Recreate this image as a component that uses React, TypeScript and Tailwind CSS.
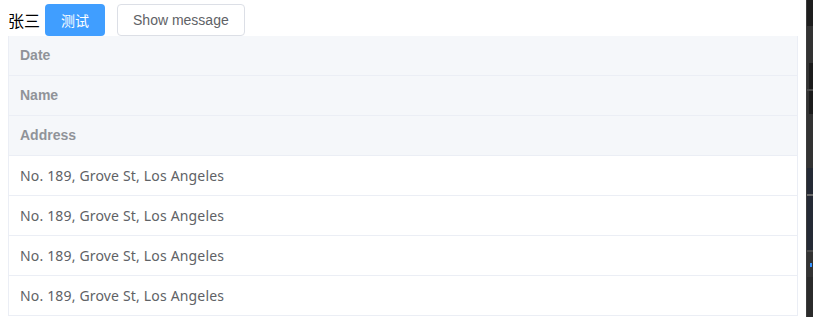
import React from "react";

const font = { fontFamily: '"Liberation Sans", "Noto Sans CJK SC", Arial, sans-serif' };

function HeaderRow({ label }: { label: string }) {
  return (
    <div className="h-10 flex items-center pl-[11px] pr-3 bg-[#f5f7fa] border-b border-[#ebeef5] text-[14px] font-bold text-[#909399]">
      {label}
    </div>
  );
}

function DataRow({ text, last }: { text: string; last?: boolean }) {
  return (
    <div
      className={
        "h-10 flex items-center pl-[11px] pr-3 bg-white text-[14px] tracking-[0.17px] text-[#606266] " +
        (last ? "" : "border-b border-[#ebeef5]")
      }
      style={{ fontFamily: '"Noto Sans", "Liberation Sans", sans-serif' }}
    >
      {text}
    </div>
  );
}

export default function App() {
  const addr = "No. 189, Grove St, Los Angeles";
  return (
    <div className="h-[317px] w-full flex overflow-hidden bg-white" style={font}>
      <div className="flex-1 min-w-0 pl-2 pr-2 pt-1">
        <div className="h-8 flex items-center">
          <span className="text-[16px] text-black leading-none" style={{ fontFamily: '"Noto Sans CJK SC", "Liberation Sans", sans-serif' }}>
            张三
          </span>
          <button className="ml-[5px] h-8 w-[60px] rounded-[4px] bg-[#409eff] text-white text-[14px] flex items-center justify-center" style={{ fontFamily: '"Noto Sans CJK SC", "Liberation Sans", sans-serif' }}>
            测试
          </button>
          <button className="ml-3 h-8 px-[15px] rounded-[4px] border border-[#dcdfe6] bg-white text-[#606266] text-[14px] flex items-center justify-center">
            Show message
          </button>
        </div>
        <div className="border-x border-[#ebeef5]">
          <HeaderRow label="Date" />
          <HeaderRow label="Name" />
          <HeaderRow label="Address" />
          <DataRow text={addr} />
          <DataRow text={addr} />
          <DataRow text={addr} />
          <DataRow text={addr} />
        </div>
      </div>
      <div className="w-[7px] h-full flex flex-col border-l border-[#3c3c3c]">
        <div className="h-[26px] bg-[#1e1e1e]" />
        <div className="h-[37px] bg-[#333333]" />
        <div className="h-[26px] bg-[#333333] flex justify-end">
          <div className="w-[4px] h-full bg-[#1c1c1c]" />
        </div>
        <div className="h-[2px] bg-[#4a4a4a]" />
        <div className="h-[23px] bg-[#333333] flex justify-end">
          <div className="w-[4px] h-full bg-[#1c1c1c]" />
        </div>
        <div className="h-[54px] bg-[#333333]" />
        <div className="h-[26px] bg-[#252a35]" />
        <div className="h-[2px] bg-[#6b6b6b]" />
        <div className="h-[54px] bg-[#252a35]" />
        <div className="h-[2px] bg-[#4a4a4a]" />
        <div className="h-[25px] bg-[#333333] flex items-center">
          <div className="w-[2px] h-[4px] bg-[#3794ff] ml-[3px]" />
        </div>
        <div className="flex-1 bg-[#2b2b2b]" />
      </div>
    </div>
  );
}
